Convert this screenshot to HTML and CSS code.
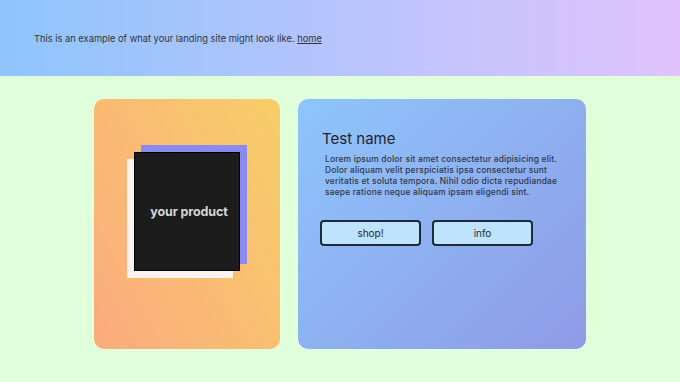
FILE: index.html
```html
<!DOCTYPE html>
<html>
<head>
<meta charset="utf-8">
<link rel="stylesheet" href="styles.css">
</head>
<body>
<header class="top">
  <p class="intro">This is an example of what your landing site might look like. <a href="#" class="home">home</a></p>
</header>
<main class="cards">
  <section class="card card-image">
    <div class="product">your product</div>
  </section>
  <section class="card card-info">
    <h1 class="title">Test name</h1>
    <p class="desc">Lorem ipsum dolor sit amet consectetur adipisicing elit. Dolor aliquam velit perspiciatis ipsa consectetur sunt veritatis et soluta tempora. Nihil odio dicta repudiandae saepe ratione neque aliquam ipsam eligendi sint.</p>
    <div class="actions">
      <button class="btn">shop!</button>
      <button class="btn">info</button>
    </div>
  </section>
</main>
</body>
</html>
```

FILE: styles.css
```css
* { box-sizing: border-box; }
html, body { margin: 0; padding: 0; }
body {
  width: 680px;
  height: 382px;
  background: #e0ffdb;
  font-family: "Inter", "Liberation Sans", sans-serif;
  color: #2b2f3a;
  overflow: hidden;
}
.top {
  height: 76px;
  background: linear-gradient(90deg, #8ec5fc 0%, #e0c3fc 100%);
  display: flex;
  align-items: center;
  padding-left: 34px;
}
.intro {
  margin: 0;
  font-size: 9.3px;
  color: #2e3440;
}
.home { color: #2e3440; }
.cards {
  display: flex;
  justify-content: center;
  gap: 18px;
  padding-top: 23px;
}
.card {
  height: 250px;
  border-radius: 10px;
}
.card-image {
  width: 186px;
  background: linear-gradient(62deg, #fbab7e 0%, #f7ce68 100%);
  display: flex;
  flex-direction: column;
  align-items: center;
  padding-top: 53px;
}
.product {
  width: 106px;
  height: 119px;
  background: #1c1c1c;
  border: 1px solid #000;
  box-shadow: 7px -7px 0 #8a8af0, -7px 7px 0 #fcf2ee;
  display: flex;
  align-items: center;
  justify-content: center;
  color: #d6d6d6;
  font-weight: 700;
  font-size: 12.5px;
  letter-spacing: -0.1px;
  padding-left: 4px;
}
.card-info {
  width: 288px;
  background: linear-gradient(135deg, #8ec5fc 0%, #8e9be6 100%);
  padding: 30px 22px 0 22px;
}
.title {
  margin: 0 0 6px 2px;
  font-size: 15px;
  font-weight: 400;
  color: #1f2430;
}
.desc {
  margin: 0 0 0 5px;
  font-size: 8.4px;
  line-height: 11px;
  font-weight: 500;
  letter-spacing: 0.2px;
  color: #2d3646;
  width: 238px;
}
.actions {
  display: flex;
  gap: 11px;
  margin-top: 22px;
}
.btn {
  width: 101px;
  height: 26px;
  border: 2px solid #1f2a38;
  border-radius: 4px;
  background: #bde3fd;
  font-family: "Inter", "Liberation Sans", sans-serif;
  font-size: 10px;
  color: #1f2a38;
  padding: 0;
}
```
